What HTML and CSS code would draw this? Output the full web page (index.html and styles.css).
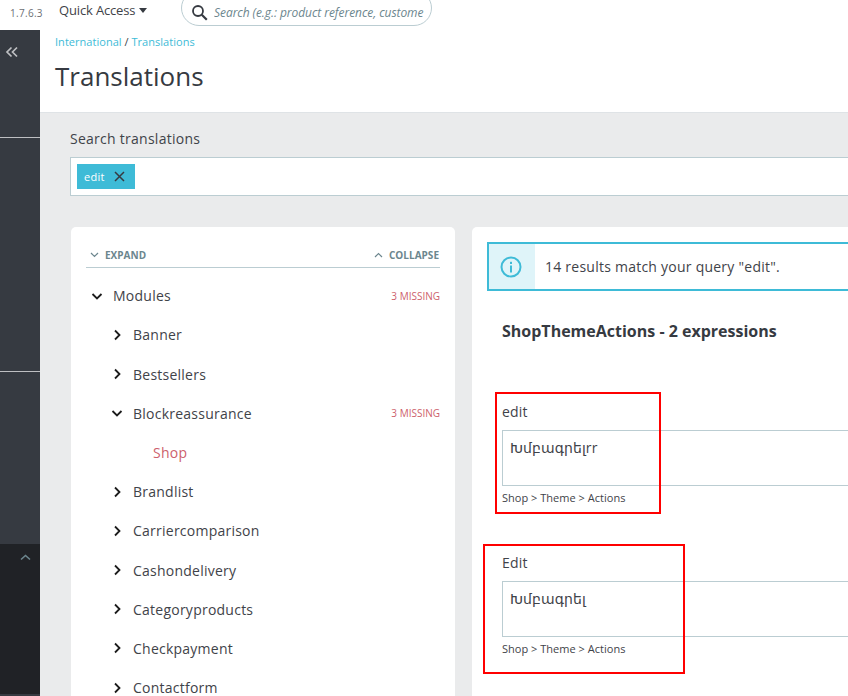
FILE: index.html
```html
<!DOCTYPE html>
<html lang="en">
<head>
<meta charset="utf-8">
<title>Translations</title>
<link rel="stylesheet" href="styles.css">
</head>
<body>
<header class="topbar">
  <span class="version">1.7.6.3</span>
  <span class="quick">Quick Access<i class="caret"></i></span>
  <div class="topsearch">
    <svg class="mag" width="18" height="18" viewBox="0 0 18 18"><circle cx="7" cy="7" r="5" fill="none" stroke="#363a41" stroke-width="1.8"/><path d="M10.8 10.8l5 5" stroke="#363a41" stroke-width="2.2" fill="none"/></svg>
    <span class="ph">Search (e.g.: product reference, custome</span>
  </div>
</header>
<div class="app">
  <nav class="side">
    <div class="side-top">
      <svg class="collapse-ic" width="14" height="12" viewBox="0 0 14 12"><path d="M6.5 1.5L2 6l4.500 4.500M12 1.500L7.500 6l4.500 4.500" fill="none" stroke="#bebfc2" stroke-width="1.700"/></svg>
    </div>
    <div class="side-mid"></div>
    <div class="side-low"></div>
    <div class="side-foot">
      <svg class="up-ic" width="11" height="7" viewBox="0 0 11 7"><path d="M1 5.500L5.500 1.500 10 5.500" fill="none" stroke="#6c868e" stroke-width="1.600"/></svg>
    </div>
    <div class="side-strip"></div>
  </nav>
  <main class="main">
    <div class="pagehead">
      <div class="crumbs"><a>International</a> / <a>Translations</a></div>
      <h1>Translations</h1>
    </div>
    <div class="content">
      <label class="search-label">Search translations</label>
      <div class="tagbox"><span class="tag">edit<svg class="tag-x" width="11" height="11" viewBox="0 0 11 11"><path d="M1 1l9 9M10 1l-9 9" stroke="#363a41" stroke-width="1.500" fill="none"/></svg></span></div>
      <div class="cols">
        <section class="card tree">
          <div class="tree-tools">
            <span class="tool"><svg width="9" height="6" viewBox="0 0 9 6"><path d="M1 1l3.500 3.500L8 1" fill="none" stroke="#6c868e" stroke-width="1.200"/></svg>EXPAND</span>
            <span class="tool"><svg width="9" height="6" viewBox="0 0 9 6"><path d="M1 5l3.500-3.500L8 5" fill="none" stroke="#6c868e" stroke-width="1.200"/></svg>COLLAPSE</span>
          </div>
          <ul class="nodes">
            <li class="node"><svg class="arr" width="12" height="12" viewBox="0 0 12 12"><path d="M1.500 4L6 8.500 10.500 4" fill="none" stroke="#1c1c1c" stroke-width="1.800"/></svg><span class="name">Modules</span><span class="missing">3 MISSING</span></li>
            <li class="node lv2"><svg class="arr" width="12" height="12" viewBox="0 0 12 12"><path d="M4 1.500L8.500 6 4 10.500" fill="none" stroke="#1c1c1c" stroke-width="1.800"/></svg><span class="name">Banner</span></li>
            <li class="node lv2"><svg class="arr" width="12" height="12" viewBox="0 0 12 12"><path d="M4 1.500L8.500 6 4 10.500" fill="none" stroke="#1c1c1c" stroke-width="1.800"/></svg><span class="name">Bestsellers</span></li>
            <li class="node lv2"><svg class="arr" width="12" height="12" viewBox="0 0 12 12"><path d="M1.500 4L6 8.500 10.500 4" fill="none" stroke="#1c1c1c" stroke-width="1.800"/></svg><span class="name">Blockreassurance</span><span class="missing">3 MISSING</span></li>
            <li class="node lv3"><span class="name red">Shop</span></li>
            <li class="node lv2"><svg class="arr" width="12" height="12" viewBox="0 0 12 12"><path d="M4 1.500L8.500 6 4 10.500" fill="none" stroke="#1c1c1c" stroke-width="1.800"/></svg><span class="name">Brandlist</span></li>
            <li class="node lv2"><svg class="arr" width="12" height="12" viewBox="0 0 12 12"><path d="M4 1.500L8.500 6 4 10.500" fill="none" stroke="#1c1c1c" stroke-width="1.800"/></svg><span class="name">Carriercomparison</span></li>
            <li class="node lv2"><svg class="arr" width="12" height="12" viewBox="0 0 12 12"><path d="M4 1.500L8.500 6 4 10.500" fill="none" stroke="#1c1c1c" stroke-width="1.800"/></svg><span class="name">Cashondelivery</span></li>
            <li class="node lv2"><svg class="arr" width="12" height="12" viewBox="0 0 12 12"><path d="M4 1.500L8.500 6 4 10.500" fill="none" stroke="#1c1c1c" stroke-width="1.800"/></svg><span class="name">Categoryproducts</span></li>
            <li class="node lv2"><svg class="arr" width="12" height="12" viewBox="0 0 12 12"><path d="M4 1.500L8.500 6 4 10.500" fill="none" stroke="#1c1c1c" stroke-width="1.800"/></svg><span class="name">Checkpayment</span></li>
            <li class="node lv2"><svg class="arr" width="12" height="12" viewBox="0 0 12 12"><path d="M4 1.500L8.500 6 4 10.500" fill="none" stroke="#1c1c1c" stroke-width="1.800"/></svg><span class="name">Contactform</span></li>
          </ul>
        </section>
        <section class="card results">
          <div class="alert">
            <div class="alert-ic"><svg width="22" height="22" viewBox="0 0 22 22"><circle cx="11" cy="11" r="9.500" fill="none" stroke="#3ebbd7" stroke-width="2"/><rect x="10" y="9.500" width="2" height="7" fill="#3ebbd7"/><rect x="10" y="5.800" width="2" height="2.200" fill="#3ebbd7"/></svg></div>
            <div class="alert-text">14 results match your query "edit".</div>
          </div>
          <h2>ShopThemeActions - 2 expressions</h2>
          <div class="expr first">
            <div class="expr-label">edit</div>
            <div class="expr-input">Խմբագրելrr</div>
            <div class="expr-path">Shop &gt; Theme &gt; Actions</div>
            <span class="mark mark-a"></span>
          </div>
          <div class="expr">
            <div class="expr-label">Edit</div>
            <div class="expr-input">Խմբագրել</div>
            <div class="expr-path">Shop &gt; Theme &gt; Actions</div>
            <span class="mark mark-b"></span>
          </div>
        </section>
      </div>
    </div>
  </main>
</div>
</body>
</html>
```
FILE: styles.css
```css
* { box-sizing: border-box; }
html, body { margin: 0; padding: 0; height: 696px; overflow: hidden; }
body { width: 848px; font-family: "Open Sans", "DejaVu Sans", sans-serif; color: #3f4349; background: #fff; }
.topbar { height: 30px; display: flex; align-items: flex-start; background: #fff; position: relative; }
.version { font-size: 10px; color: #6c6f75; margin: 7px 0 0 10px; width: 49px; line-height: 12px; letter-spacing: .3px; }
.quick { font-size: 13px; line-height: 18px; margin-top: 1px; width: 122px; color: #3f4349; letter-spacing: -.15px; }
.caret { display: inline-block; margin-left: 4px; vertical-align: 2px; border: 4.500px solid transparent; border-top: 5px solid #363a41; border-bottom: 0; }
.topsearch { width: 251px; height: 36px; margin-top: -10px; border: 1px solid #bbcdd2; border-radius: 18px; display: flex; align-items: center; padding: 10px 0 0 9px; background: #fff; }
.mag { flex: none; margin-right: 5px; margin-top: -1px; }
.ph { font-size: 12px; font-style: italic; color: #6c868e; white-space: nowrap; overflow: hidden; width: 212px; line-height: 18px; margin-top: -1px; letter-spacing: -.06px; }
.app { display: flex; height: 666px; }
.side { width: 40px; flex: none; background: #363a41; display: flex; flex-direction: column; }
.side-top { height: 108px; border-bottom: 1px solid #bebfc2; padding: 16px 0 0 5px; }
.collapse-ic { display: block; }
.side-mid { height: 234px; border-bottom: 1px solid #bebfc2; }
.side-low { height: 172px; }
.side-foot { flex: 1; background: #202226; padding: 10px 0 0 20px; }
.side-strip { height: 2px; background: #363a41; }
.up-ic { display: block; }
.main { width: 1000px; flex: none; }
.pagehead { height: 83px; background: #fff; border-bottom: 1px solid #dfe3e6; padding: 5px 15px 0; }
.crumbs { font-size: 11px; line-height: 14px; color: #3f4349; letter-spacing: .03px; }
.crumbs a { color: #3ebbd7; }
h1 { margin: 9px 0 0; font-size: 26px; font-weight: 400; line-height: 36px; color: #363a41; }
.content { background: #eaebec; height: 583px; padding: 16px 0 0 30px; overflow: hidden; }
.search-label { display: block; font-size: 14px; line-height: 19px; color: #3f4349; letter-spacing: .26px; }
.tagbox { margin-top: 9px; height: 39px; width: 900px; background: #fff; border: 1px solid #bbcdd2; padding: 6px; }
.tag { display: inline-flex; align-items: center; height: 25px; width: 58px; padding-left: 7px; background: #3ebbd7; color: #fff; font-size: 11px; letter-spacing: .3px; }
.tag-x { margin-left: 9px; }
.cols { display: flex; gap: 17px; margin-top: 31px; margin-left: 1px; align-items: flex-start; }
.card { background: #fff; border-radius: 5px; }
.tree { width: 384px; height: 520px; padding: 15px 15px 0 15px; }
.tree-tools { display: flex; justify-content: space-between; height: 26px; border-bottom: 1px solid #bbcdd2; padding: 0 1px 0 4px; }
.tool { font-size: 10px; font-weight: 700; line-height: 24px; color: #6c868e; letter-spacing: .02px; display: flex; align-items: center; gap: 6px; }
.nodes { list-style: none; margin: 8.200px 0 0; padding: 0; }
.node { display: flex; align-items: center; height: 39.200px; font-size: 14px; padding-left: 5px; letter-spacing: .24px; }
.lv2 { padding-left: 25px; }
.lv3 { padding-left: 67px; }
.arr { flex: none; margin-right: 10px; }
.name { flex: 1; color: #3f4349; }
.name.red { color: #cd5f6c; }
.missing { font-size: 10px; color: #cd5f6c; letter-spacing: 0; }
.results { width: 500px; height: 520px; padding: 15px 0 0 15px; }
.alert { display: flex; height: 49px; border: 2px solid #3ebbd7; border-right: 0; }
.alert-ic { width: 46px; background: #dff4f9; display: flex; align-items: center; justify-content: center; padding-right: 3px; }
.alert-text { padding: 1px 0 0 10px; font-size: 14px; line-height: 44px; letter-spacing: .24px; }
h2 { margin: 29px 0 0 15px; font-size: 16px; font-weight: 700; line-height: 22px; color: #363a41; }
.expr { position: relative; margin-left: 15px; height: 151px; }
.expr.first { margin-top: 60px; }
.expr-label { font-size: 14px; line-height: 19px; letter-spacing: .2px; }
.expr-input { margin-top: 9px; height: 56px; border: 1px solid #bbcdd2; padding: 7px 7px; font-size: 14px; line-height: 20px; letter-spacing: .1px; }
.expr-path { font-size: 11px; line-height: 15px; margin-top: 4px; letter-spacing: .02px; }
.mark { position: absolute; border: 2px solid #f00; }
.mark-a { left: -7px; top: -10px; width: 166px; height: 122px; }
.mark-b { left: -19px; top: -9px; width: 202px; height: 130px; }
```
